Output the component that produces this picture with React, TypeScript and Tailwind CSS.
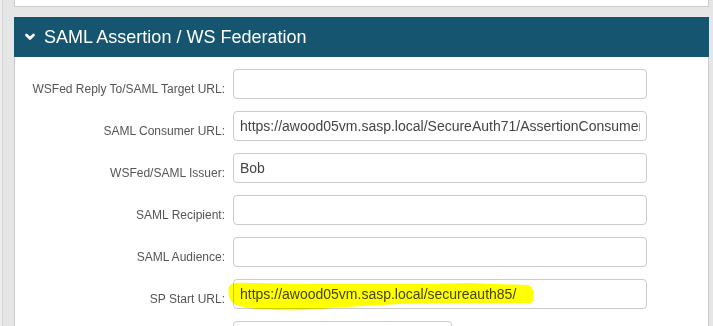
const rows: { label: string; value: string; width?: string }[] = [
  { label: 'WSFed Reply To/SAML Target URL:', value: '' },
  { label: 'SAML Consumer URL:', value: 'https://awood05vm.sasp.local/SecureAuth71/AssertionConsumer.aspx' },
  { label: 'WSFed/SAML Issuer:', value: 'Bob' },
  { label: 'SAML Recipient:', value: '' },
  { label: 'SAML Audience:', value: '' },
  { label: 'SP Start URL:', value: 'https://awood05vm.sasp.local/secureauth85/' },
]

function Chevron() {
  return (
    <svg width="10" height="8" viewBox="0 0 10 8" fill="none" stroke="white" strokeWidth="2.6" strokeLinecap="round" strokeLinejoin="round">
      <polyline points="1.5,2 5,5.5 8.5,2" />
    </svg>
  )
}

export default function App() {
  return (
    <div className="relative w-[713px] h-[326px] overflow-hidden bg-[#e6e6e6] flex font-['Liberation_Sans',Arial,sans-serif]">
      <div className="w-[3px] h-full bg-[#eeeeee] border-r border-[#d2d2d2] flex-shrink-0" />
      <div className="ml-[11px] w-[695px] flex flex-col flex-shrink-0">
        <div className="h-[7px] bg-white border border-t-0 border-[#cccccc] flex-shrink-0" />
        <div className="mt-[10px] h-[40px] bg-[#155570] flex items-center flex-shrink-0">
          <div className="ml-[11px] w-[10px] flex items-center"><Chevron /></div>
          <span className="ml-[9px] text-[18px] text-white leading-none">SAML Assertion / WS Federation</span>
        </div>
        <div className="flex-1 bg-white border-x border-[#cccccc] pt-[12px]">
          {rows.map(r => (
            <div key={r.label} className="flex h-[42px]">
              <label className="w-[210px] text-right text-[12px] leading-[16px] text-[#555555] pt-[12px] whitespace-nowrap">{r.label}</label>
              <input readOnly value={r.value}
                className="ml-[8px] w-[414px] h-[30px] border border-[#cccccc] rounded-[4px] px-[6px] text-[14px] text-[#444444] bg-white outline-none" />
            </div>
          ))}
          <div className="flex h-[42px]">
            <div className="w-[210px]" />
            <input readOnly value="" className="ml-[8px] w-[219px] h-[30px] border border-[#cccccc] rounded-[4px] bg-white" />
          </div>
        </div>
      </div>
      <svg className="absolute left-0 top-0 pointer-events-none mix-blend-multiply" width="713" height="326" viewBox="0 0 713 326">
        <path fill="#ffff00" d="M229 287 C230 283 236 282 248 283 L320 284 L420 284 L470 283 L528 285 C535 286 536 302 530 303 L470 303 L400 304 L345 307 C320 309 300 311 275 310 C255 309 240 308 233 303 C228 299 228 291 229 287 Z" />
      </svg>
    </div>
  )
}
